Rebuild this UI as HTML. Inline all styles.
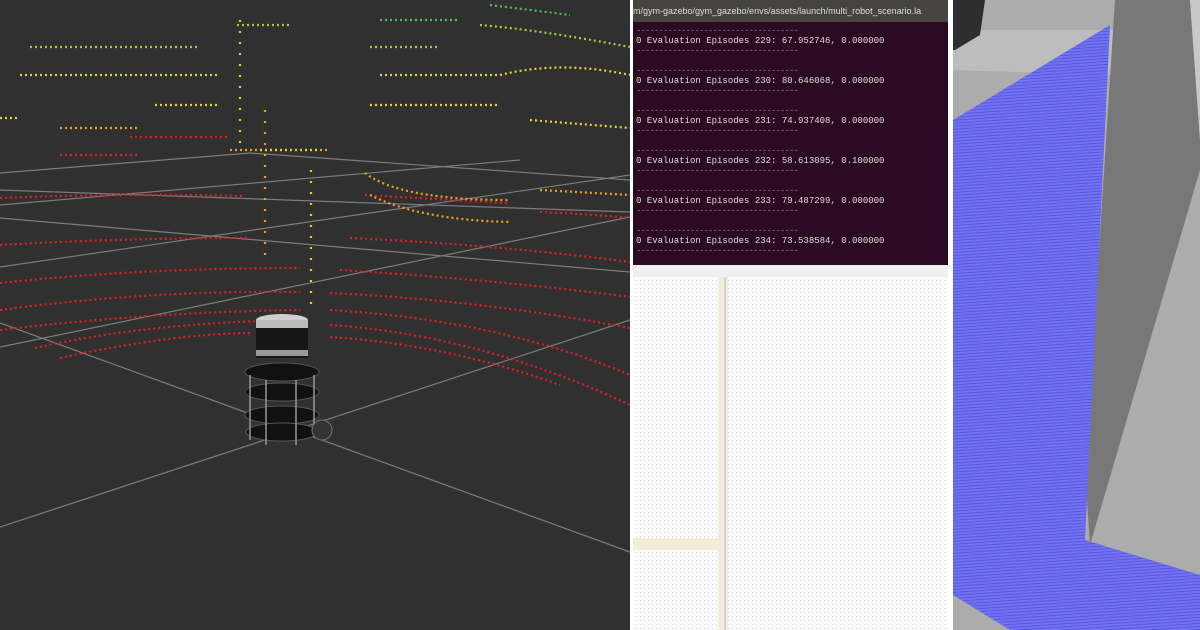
<!DOCTYPE html>
<html><head><meta charset="utf-8"><style>
html,body{margin:0;padding:0;width:1200px;height:630px;overflow:hidden;background:#fff}
.term{position:absolute;left:633px;top:0;width:315px;height:265px;background:#2c0b22;overflow:hidden;font-family:"Liberation Mono",monospace;font-size:9px;color:#ddd}
.tb{height:22px;background:#46443f;color:#ddd;font-family:"Liberation Sans",sans-serif;font-size:9px;line-height:22px;white-space:nowrap}
.row{position:absolute;left:3px;white-space:pre;line-height:10px}
.d{color:#8a7a86;letter-spacing:-0.9px}
</style></head><body>
<svg width="1200" height="630" style="position:absolute;left:0;top:0">
<defs>
<pattern id="bl" width="6" height="3" patternUnits="userSpaceOnUse" patternTransform="rotate(-4)"><rect width="6" height="3" fill="#7272f2"/><rect width="6" height="1" fill="#5a5ae0"/></pattern>
<pattern id="dots" width="4" height="4" patternUnits="userSpaceOnUse"><rect width="4" height="4" fill="#fbfbfb"/><rect width="1" height="1" fill="#d8d8d0"/></pattern>
</defs>
<rect x="0" y="0" width="630" height="630" fill="#303030"/>
<g stroke="#7c7c7c" stroke-width="1.2" fill="none">
<line x1="0" y1="323" x2="630" y2="552"/>
<line x1="0" y1="218" x2="630" y2="272"/>
<line x1="0" y1="190" x2="630" y2="212"/>
<line x1="250" y1="153" x2="630" y2="180"/>
<line x1="0" y1="527" x2="630" y2="320"/>
<line x1="0" y1="347" x2="630" y2="217"/>
<line x1="0" y1="267" x2="630" y2="175"/>
<line x1="0" y1="205" x2="520" y2="160"/>
<line x1="0" y1="173" x2="250" y2="153"/>
</g>
<g fill="none" stroke-width="2.2" stroke-dasharray="2 3">
<g stroke="#e02020">
<path d="M0 198 Q120 193 245 196"/>
<path d="M0 245 Q120 238 250 238"/>
<path d="M0 283 Q140 268 300 268"/>
<path d="M0 310 Q150 290 300 292"/>
<path d="M0 330 Q150 312 300 310"/>
<path d="M35 348 Q150 322 300 320"/>
<path d="M60 358 Q170 334 250 333"/>
<path d="M350 238 Q500 245 630 262"/>
<path d="M340 270 Q500 280 630 297"/>
<path d="M330 293 Q480 300 630 328"/>
<path d="M330 310 Q500 320 630 375"/>
<path d="M330 325 Q480 335 630 405"/>
<path d="M330 337 Q450 345 560 385"/>
<path d="M365 195 Q450 200 510 203"/>
<path d="M540 212 Q590 214 630 218"/>
<path d="M130 137 L230 137"/>
<path d="M60 155 L140 155"/>
</g>
<g stroke="#f0a020">
<path d="M365 173 Q400 200 510 200"/>
<path d="M370 195 Q420 220 510 222"/>
<path d="M540 190 L630 195"/>
<path d="M60 128 L140 128"/>
<path d="M230 150 L330 150"/>
</g>
<g stroke="#e8d030">
<path d="M20 75 L220 75"/>
<path d="M380 75 L500 75"/>
<path d="M500 75 Q560 60 630 75"/>
<path d="M155 105 L220 105"/>
<path d="M370 105 L500 105"/>
<path d="M530 120 L630 128"/>
<path d="M260 150 L320 150"/>
<path d="M0 118 L20 118"/>
</g>
<g stroke="#a0d040">
<path d="M30 47 L200 47"/>
<path d="M370 47 L440 47"/>
<path d="M480 25 Q540 30 630 47"/>
<path d="M237 25 L290 25"/>
</g>
<g stroke="#50c050">
<path d="M490 5 L570 15"/>
<path d="M380 20 L460 20"/>
</g>
<g stroke="#e8d030" stroke-dasharray="2 9"><path d="M311 170 L311 310"/><path d="M265 110 L265 260" stroke="#f0a020"/><path d="M240 20 L240 150"/></g>
</g>
<!-- robot -->
<rect x="256" y="320" width="52" height="38" fill="#151515"/>
<ellipse cx="282" cy="320" rx="26" ry="6" fill="#cfcfcf"/>
<rect x="256" y="320" width="52" height="8" fill="#bbb"/>
<rect x="256" y="350" width="52" height="6" fill="#999"/>
<g fill="#111" stroke="#555">
<ellipse cx="282" cy="372" rx="37" ry="9"/><ellipse cx="282" cy="392" rx="37" ry="9"/><ellipse cx="282" cy="415" rx="37" ry="9"/><ellipse cx="282" cy="432" rx="36" ry="9"/>
</g>
<g stroke="#999" stroke-width="1.5"><line x1="250" y1="375" x2="250" y2="440"/><line x1="266" y1="380" x2="266" y2="445"/><line x1="296" y1="380" x2="296" y2="445"/><line x1="314" y1="375" x2="314" y2="435"/></g>
<circle cx="322" cy="430" r="10" fill="#333" stroke="#777"/>
<!-- middle -->
<rect x="633" y="0" width="315" height="630" fill="url(#dots)"/>
<rect x="633" y="265" width="315" height="12" fill="#efefef"/>
<rect x="718" y="277" width="10" height="353" fill="#f1ece0"/>
<line x1="725" y1="277" x2="725" y2="630" stroke="#d8d2c4" stroke-width="2"/>
<rect x="633" y="538" width="85" height="12" fill="#f4ecd8"/>
<!-- right -->
<rect x="953" y="0" width="247" height="630" fill="#acacac"/>
<polygon points="953,30 1115,30 1115,75 953,70" fill="#bdbdbd"/>
<polygon points="953,0 985,0 980,35 955,50 953,50" fill="#2e2e2e"/>
<polygon points="1115,0 1190,0 1200,140 1200,170 1090,545 1085,470" fill="#787878"/>
<polygon points="1190,0 1200,0 1200,140" fill="#c8c8c8"/>
<polygon points="953,120 1110,25 1085,540 1200,575 1200,630 1010,630 953,595" fill="url(#bl)"/>
</svg>
<div class="term">
<div class="tb">m/gym-gazebo/gym_gazebo/envs/assets/launch/multi_robot_scenario.la</div>
<div class="row" style="top:26px"><span class="d">------------------------------------</span>
0 Evaluation Episodes 229: 67.952746, 0.000000
<span class="d">------------------------------------</span></div>
<div class="row" style="top:66px"><span class="d">------------------------------------</span>
0 Evaluation Episodes 230: 80.646068, 0.000000
<span class="d">------------------------------------</span></div>
<div class="row" style="top:106px"><span class="d">------------------------------------</span>
0 Evaluation Episodes 231: 74.937408, 0.000000
<span class="d">------------------------------------</span></div>
<div class="row" style="top:146px"><span class="d">------------------------------------</span>
0 Evaluation Episodes 232: 58.613095, 0.100000
<span class="d">------------------------------------</span></div>
<div class="row" style="top:186px"><span class="d">------------------------------------</span>
0 Evaluation Episodes 233: 79.487299, 0.000000
<span class="d">------------------------------------</span></div>
<div class="row" style="top:226px"><span class="d">------------------------------------</span>
0 Evaluation Episodes 234: 73.538584, 0.000000
<span class="d">------------------------------------</span></div>
</div>
</body></html>
